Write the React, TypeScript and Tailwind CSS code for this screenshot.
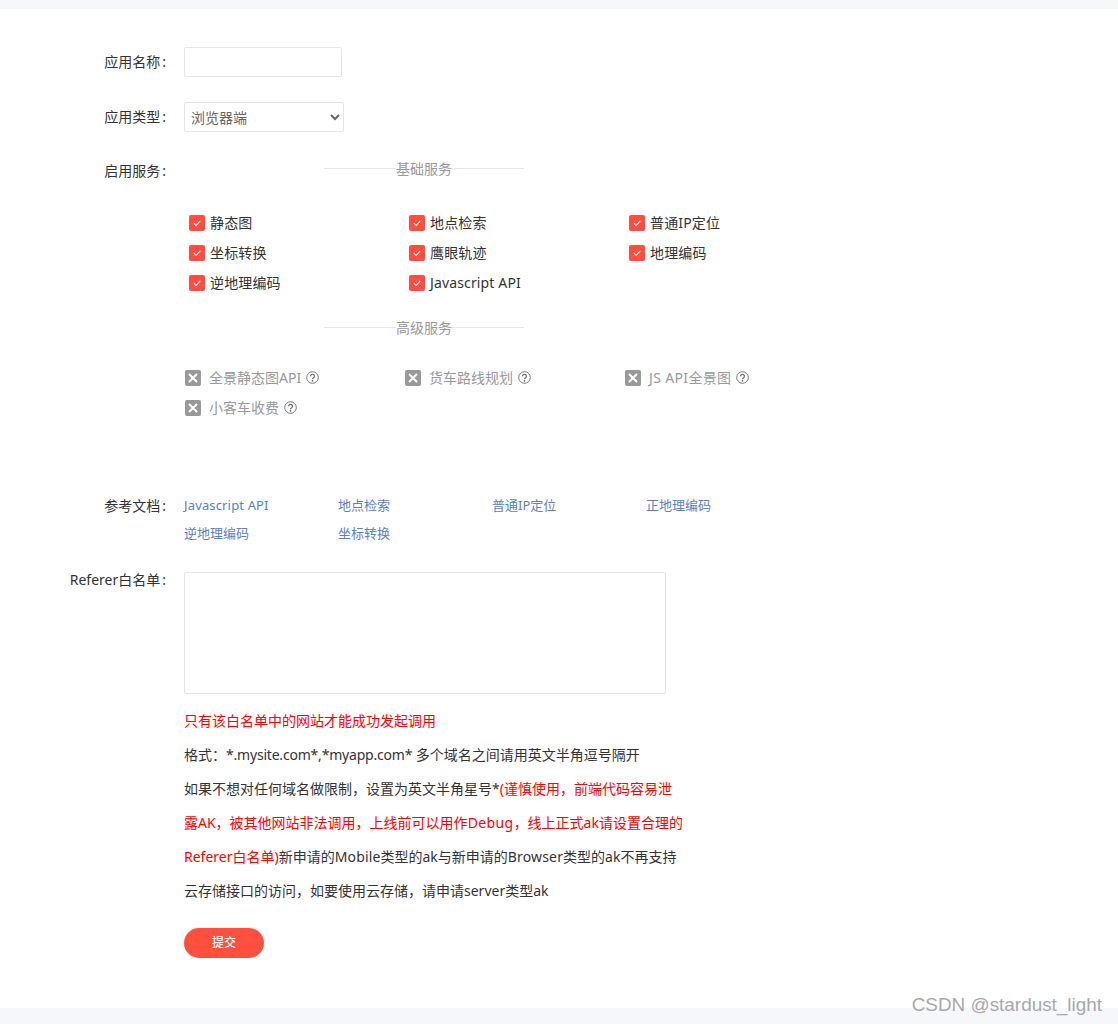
const CJK = "font-['Noto_Sans','Noto_Sans_CJK_SC',sans-serif]";

function Label({ children, className = "" }: { children: React.ReactNode; className?: string }) {
  return (
    <div className={`w-[166px] shrink-0 text-right text-[14px] leading-[20px] text-[#333] ${className}`}>
      {children}
      <span className="ml-[2px]">:</span>
    </div>
  );
}

function Divider({ text, className = "" }: { text: string; className?: string }) {
  return (
    <div className={`flex h-[20px] w-[200px] items-center ${className}`}>
      <div className="h-px flex-1 -translate-y-[1px] bg-[#e6e6e6]" />
      <span className="text-[14px] leading-[20px] text-[#999]">{text}</span>
      <div className="h-px flex-1 -translate-y-[1px] bg-[#e6e6e6]" />
    </div>
  );
}

function Checked({ text }: { text: string }) {
  return (
    <div className="flex h-[30px] w-[220px] items-center">
      <span className="mt-[1px] flex h-[16px] w-[16px] items-center justify-center rounded-[2px] bg-[#ff4d40]">
        <svg width="10" height="10" viewBox="0 0 10 10" fill="none">
          <path d="M1.8 5.1 4.2 7.4 8.3 2.9" stroke="#fff" strokeWidth="1.1" />
        </svg>
      </span>
      <span className="ml-[5px] text-[14px] tracking-[0.01em] text-[#333]">{text}</span>
    </div>
  );
}

function Disabled({ text, wide = false }: { text: string; wide?: boolean }) {
  return (
    <div className="flex h-[30px] w-[220px] items-center">
      <span className="mt-[1px] flex h-[16px] w-[16px] items-center justify-center rounded-[2px] bg-[#999]">
        <svg width="10" height="10" viewBox="0 0 10 10" fill="none">
          <path d="M1 1 9 9M9 1 1 9" stroke="#fff" strokeWidth="2" />
        </svg>
      </span>
      <span className={`ml-[8px] text-[14px] text-[#999] ${wide ? "tracking-[0.35px]" : ""}`}>{text}</span>
      <svg className="ml-[5px] mt-[1px]" width="13" height="13" viewBox="0 0 13 13" fill="none">
        <circle cx="6.5" cy="6.5" r="5.8" stroke="#777" strokeWidth="1" />
        <path d="M4.6 5.2a1.9 1.9 0 1 1 3 1.5c-.7.4-1.1.8-1.1 1.5" stroke="#666" strokeWidth="1.2" />
        <circle cx="6.5" cy="9.9" r=".8" fill="#666" />
      </svg>
    </div>
  );
}

function DocLink({ text, wide = false }: { text: string; wide?: boolean }) {
  return (
    <a
      className={`block h-[28px] w-[154px] text-[13px] leading-[28px] text-[#5c7fc4] ${wide ? "tracking-[0.15px]" : ""}`}
      href="#"
    >
      {text}
    </a>
  );
}

export default function App() {
  return (
    <div className={`relative min-h-[1024px] bg-[#f5f7fb] pt-[9px] pb-[16px] ${CJK}`}>
      <div className="h-[999px] bg-white pt-[38px]">
        <div className="flex items-center">
          <Label>应用名称</Label>
          <input className="ml-[18px] h-[30px] w-[158px] rounded-[2px] border border-[#e6e6e6] bg-white" />
        </div>

        <div className="mt-[25px] flex items-center">
          <Label>应用类型</Label>
          <select className="ml-[18px] h-[30px] w-[160px] rounded-[2px] border border-[#e6e6e6] bg-white pl-[2px] text-[14px] text-[#666]">
            <option>浏览器端</option>
          </select>
        </div>

        <div className="mt-[26px] flex">
          <Label className="mt-[3px]">启用服务</Label>
          <div className="ml-[18px]">
            <Divider text="基础服务" className="ml-[140px] mt-[1px]" />
            <div className="ml-[5px] mt-[28px] flex w-[660px] flex-wrap">
              {["静态图", "地点检索", "普通IP定位", "坐标转换", "鹰眼轨迹", "地理编码", "逆地理编码", "Javascript API"].map((t) => (
                <Checked key={t} text={t} />
              ))}
            </div>
            <Divider text="高级服务" className="ml-[140px] mt-[21px]" />
            <div className="ml-[1px] mt-[24px] flex w-[660px] flex-wrap">
              {["全景静态图API", "货车路线规划", "JS API全景图", "小客车收费"].map((t) => (
                <Disabled key={t} text={t} wide={t === "JS API全景图"} />
              ))}
            </div>
          </div>
        </div>

        <div className="mt-[69px] flex">
          <Label className="mt-[5px]">参考文档</Label>
          <div className="ml-[18px] flex w-[616px] flex-wrap">
            {["Javascript API", "地点检索", "普通IP定位", "正地理编码", "逆地理编码", "坐标转换"].map((t) => (
              <DocLink key={t} text={t} wide={t === "Javascript API"} />
            ))}
          </div>
        </div>

        <div className="mt-[25px] flex">
          <Label className="mt-[-2px]">Referer白名单</Label>
          <div className="ml-[18px]">
            <textarea className="block h-[122px] w-[482px] resize-none rounded-[2px] border border-[#e6e6e6] bg-white" />
            <div className="mt-[10px] whitespace-nowrap text-[14px] leading-[34px] text-[#333]">
              <div className="text-[#ff0000]">只有该白名单中的网站才能成功发起调用</div>
              <div>
                格式：<span className="tracking-[-0.2px]">*.mysite.com*,*myapp.com* </span>多个域名之间请用英文半角逗号隔开
              </div>
              <div>
                如果不想对任何域名做限制，设置为英文半角星号*
                <span className="text-[#ff0000]">(谨慎使用，前端代码容易泄</span>
              </div>
              <div className="text-[#ff0000]">
                露AK，被其他网站非法调用，上线前可以用作<span className="tracking-[0.4px]">Debug</span>，线上正式ak请设置合理的
              </div>
              <div>
                <span className="text-[#ff0000]">Referer白名单)</span>
                新申请的<span className="tracking-[0.15px]">Mobile</span>类型的ak与新申请的<span className="tracking-[0.15px]">Browser</span>类型的ak不再支持
              </div>
              <div>云存储接口的访问，如要使用云存储，请申请server类型ak</div>
            </div>
            <button className="mt-[20px] block h-[30px] w-[80px] rounded-full bg-[#ff4f3e] text-[12px] font-medium text-white">
              提交
            </button>
          </div>
        </div>
      </div>
      <div className="absolute right-[16px] top-[992px] font-['Liberation_Sans',sans-serif] text-[18.9px] leading-[26px] text-[#a8a8a8]">
        CSDN @stardust_light
      </div>
    </div>
  );
}
